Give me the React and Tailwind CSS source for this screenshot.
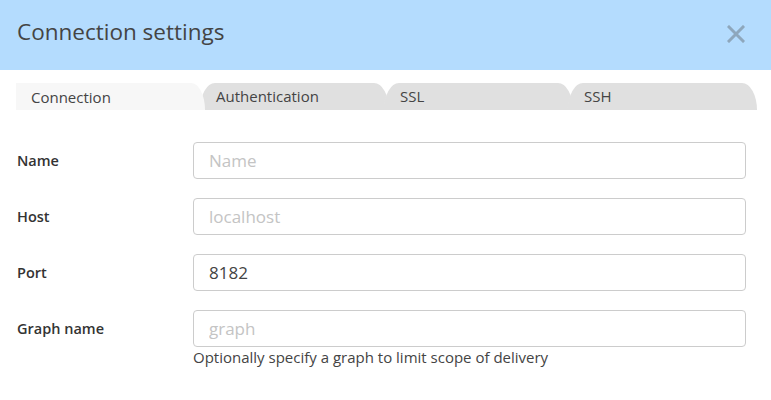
import React from "react";

const tabs = ["Connection", "Authentication", "SSL", "SSH"];

const fields = [
  { label: "Name", placeholder: "Name", value: "" },
  { label: "Host", placeholder: "localhost", value: "" },
  { label: "Port", placeholder: "", value: "8182" },
  {
    label: "Graph name",
    placeholder: "graph",
    value: "",
    help: "Optionally specify a graph to limit scope of delivery",
  },
];

function CloseIcon() {
  return (
    <svg width="18" height="18" viewBox="0 0 18 18">
      <path
        d="M2 2 L16 16 M16 2 L2 16"
        stroke="#8ea7bc"
        strokeWidth="3"
        strokeLinecap="square"
      />
    </svg>
  );
}

export default function App() {
  return (
    <div
      className="w-[771px] h-[400px] bg-white text-[#444]"
      style={{ fontFamily: '"Open Sans", "Noto Sans", sans-serif' }}
    >
      {/* header */}
      <div className="h-[70px] bg-[#b4dcfe] flex items-center justify-between pl-[17px] pr-[26px]">
        <div className="text-[22.5px] text-[#444] leading-none pb-[6px]">Connection settings</div>
        <button className="pb-[2px]">
          <CloseIcon />
        </button>
      </div>

      {/* tabs */}
      <div className="flex pl-[16px] mt-[13px] h-[27px]">
        {tabs.map((t, i) => (
          <div
            key={t}
            className={
              i === 0
                ? "relative z-10 w-[189px] h-full bg-[#f7f7f7] rounded-tr-[14px_27px] pl-[15px] pt-[3px] text-[15px] text-[#444]"
                : "relative w-[189px] -ml-[5px] h-full bg-[#e0e0e0] rounded-t-[15px_27px] pl-[16px] pt-[2px] text-[15px] text-[#444] shadow-[2px_0_3px_rgba(255,255,255,0.9)]"
            }
          >
            {t}
          </div>
        ))}
      </div>

      {/* form */}
      <div className="pl-[17px] pr-[25px] pt-[32px] flex flex-col gap-[19px]">
        {fields.map((f) => (
          <div key={f.label} className="flex items-start">
            <label className="w-[176px] shrink-0 h-[37px] flex items-center text-[14.5px] font-semibold text-[#333]">
              {f.label}
            </label>
            <div className="flex-1">
              <input
                type="text"
                placeholder={f.placeholder}
                defaultValue={f.value}
                className="w-full h-[37px] border border-[#ccc] rounded-[4px] px-[15px] text-[17px] text-[#444] placeholder:text-[#c4c4c4] outline-none"
              />
              {f.help && (
                <div className="text-[15px] text-[#444] mt-[0px] leading-[21px]">{f.help}</div>
              )}
            </div>
          </div>
        ))}
      </div>
    </div>
  );
}
